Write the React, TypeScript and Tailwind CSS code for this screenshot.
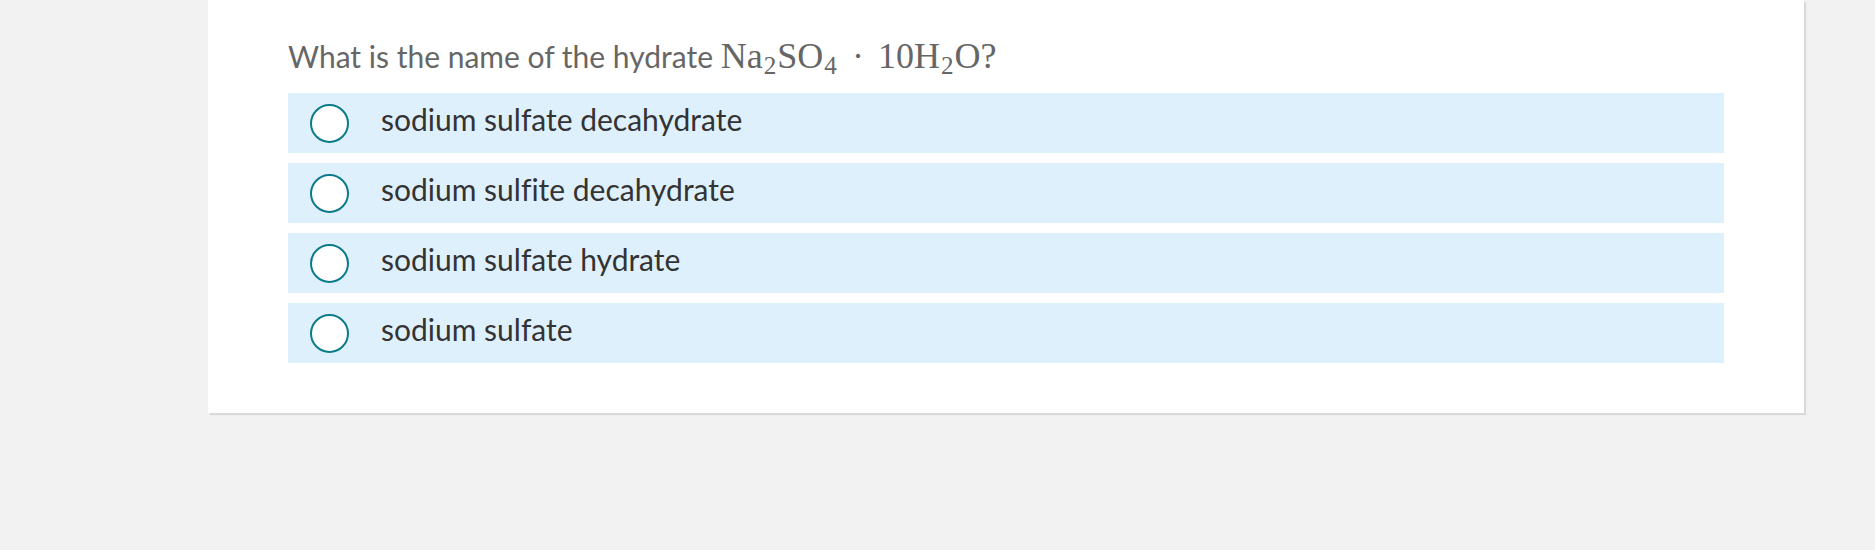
const options = [
    'sodium sulfate decahydrate',
    'sodium sulfite decahydrate',
    'sodium sulfate hydrate',
    'sodium sulfate',
];

const Sub = ({ children }: { children: React.ReactNode }) => (
    <sub className="text-[0.7em] relative top-[0.22em] align-baseline leading-none mx-[1px]">{children}</sub>
);

const App = () => {
    return (
        <div className="h-[550px] w-full bg-[#f2f2f2] font-['Lato',sans-serif] [font-variant-ligatures:none]">
            {/* Card */}
            <div className="ml-[208px] w-[1596px] h-[413px] bg-white px-[80px] pt-[36px] shadow-[2px_2px_1px_rgba(0,0,0,0.1)]">
                {/* Question */}
                <p className="h-[40px] text-[30px] leading-[40px] text-[#666666] mb-[17px]">
                    What is the name of the hydrate{' '}
                    <span className="font-['Liberation_Serif',serif] text-[36px] leading-none">
                        Na<Sub>2</Sub>SO<Sub>4</Sub>
                        <span className="mx-[14px]">·</span>
                        10H<Sub>2</Sub>O?
                    </span>
                </p>

                {/* Options */}
                <div className="flex flex-col gap-[10px]">
                    {options.map((opt) => (
                        <label
                            key={opt}
                            className="h-[60px] bg-[#dff0fd] flex items-center pl-[22px] cursor-pointer"
                        >
                            <span className="w-[39px] h-[39px] rounded-full border-2 border-[#0a7b8a] bg-white shrink-0"></span>
                            <span className="ml-[32px] mb-[9px] text-[30px] leading-[36px] text-[#333333]">{opt}</span>
                        </label>
                    ))}
                </div>
            </div>
        </div>
    );
};

export default App;
